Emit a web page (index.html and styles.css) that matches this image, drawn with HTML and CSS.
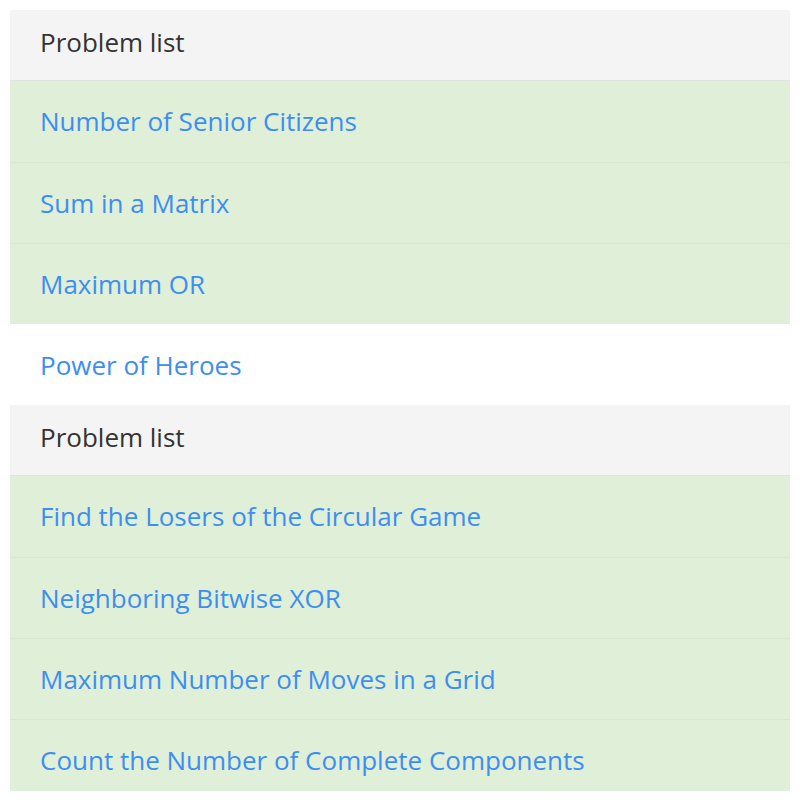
FILE: index.html
```html
<!DOCTYPE html>
<html lang="en">
  <head>
    <meta charset="UTF-8">
    <meta name="viewport" content="width=device-width, initial-scale=1.0">
    <title>Problem list</title>
    <link rel="stylesheet" href="styles.css">
  </head>
  <body>
<div class="panel">
  <div class="panel-heading">Problem list</div>
  <ul class="list-group">
    <li class="list-item solved"><a href="#">Number of Senior Citizens</a></li>
    <li class="list-item solved"><a href="#">Sum in a Matrix</a></li>
    <li class="list-item solved"><a href="#">Maximum OR</a></li>
    <li class="list-item"><a href="#">Power of Heroes</a></li>
  </ul>
</div>

<div class="panel">
  <div class="panel-heading">Problem list</div>
  <ul class="list-group">
    <li class="list-item solved"><a href="#">Find the Losers of the Circular Game</a></li>
    <li class="list-item solved"><a href="#">Neighboring Bitwise XOR</a></li>
    <li class="list-item solved"><a href="#">Maximum Number of Moves in a Grid</a></li>
    <li class="list-item solved last"><a href="#">Count the Number of Complete Components</a></li>
  </ul>
</div>
  </body>
</html>
```

FILE: styles.css
```css
body {
  margin: 0;
  padding: 10px;
  font:
    26px "Open Sans",
    sans-serif;
  background: white;
}

.panel {
  display: flex;
  flex-direction: column;
}

.panel-heading {
  height: 71px;
  padding: 14px 30px 0 30px;
  background-color: #f4f4f4;
  color: #333;
  border-bottom: 1px solid #e2e2e2;
  box-sizing: border-box;
}

.list-group {
  list-style: none;
  margin: 0;
  padding: 0;
}

.list-item {
  height: 81px;
  padding: 22px 30px 0 30px;
  box-sizing: border-box;
  border-top: 1px solid #d8e6d2;
}
.list-item:first-child {
  border-top: none;
}
.list-item.solved {
  background-color: #dfefd8;
}
.list-item:not(.solved) {
  border-top-color: transparent;
}
.list-item.last {
  height: 72px;
}

.list-item a {
  color: #3d8ef0;
  text-decoration: none;
}
```
